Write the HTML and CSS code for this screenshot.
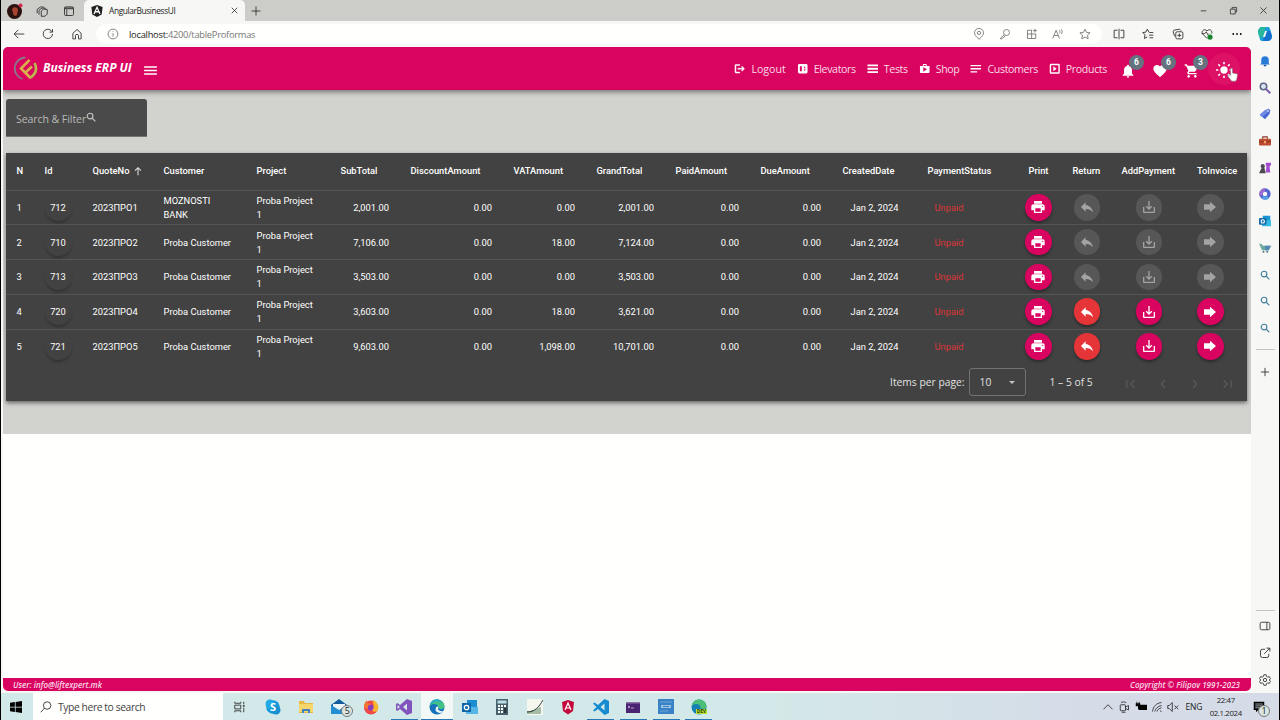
FILE: index.html
```html
<!DOCTYPE html>
<html lang="en">
<head>
	<meta charset="utf-8">
	<title>AngularBusinessUI</title>
	<link rel="stylesheet" href="styles.css">
</head>
<body>

<svg class="defs">
	<symbol id="print" viewBox="0 0 24 24"><path d="M19 8H5c-1.66 0-3 1.34-3 3v6h4v4h12v-4h4v-6c0-1.66-1.34-3-3-3zm-3 11H8v-5h8v5zm3-7c-.55 0-1-.45-1-1s.45-1 1-1 1 .45 1 1-.45 1-1 1zm-1-9H6v4h12V3z"/></symbol>
	<symbol id="reply" viewBox="0 0 24 24"><path d="M10 9V5l-7 7 7 7v-4.1c5 0 8.5 1.6 11 5.1-1-5-4-10-11-11z"/></symbol>
	<symbol id="save" viewBox="0 0 24 24"><path d="M19 12v7H5v-7H3v7c0 1.1.9 2 2 2h14c1.1 0 2-.9 2-2v-7h-2zm-6 .67l2.59-2.58L17 11.5l-5 5-5-5 1.41-1.41L11 12.67V3h2z"/></symbol>
	<symbol id="forward" viewBox="0 0 24 24"><path d="M3 8h9V4l9 8-9 8v-4H3z"/></symbol>
	<symbol id="glass" viewBox="0 0 16 16"><circle cx="6.5" cy="6.5" r="4.5"/><path d="M10 10l5 5"/></symbol>
</svg>

<div class="titlebar">
	<div class="tab-tools">
		<svg class="avatar" viewBox="0 0 16 16"><circle cx="7.5" cy="8.5" r="7.5" fill="#2b1210"/><path d="M5 6c2-3 6-2 6 1l-1 5c-2 2-4 0-4-2z" fill="#a5452f"/><circle cx="13.5" cy="2.5" r="2" fill="#d32444"/></svg>
		<svg class="line" viewBox="0 0 16 16"><path d="M1.500 11V6L6 2.500l5 .5M4 13V7l4-3 5 .5M7 8l3-2.500 5 .5v6l-3 3H7z"/></svg>
		<svg class="line" viewBox="0 0 16 16"><rect x="2" y="2.5" width="12" height="11.5" rx="1.5"/><path d="M2 5h12M2 4h12M5 6v8"/></svg>
	</div>
	<div class="tab">
		<svg viewBox="0 0 16 16" width="12" height="12"><path d="M8 0l7.5 2.700-1.200 9.800L8 16l-6.300-3.500L.5 2.700z" fill="#202020"/><path d="M4 12L8 3l4 9M5.500 9h5" fill="none" stroke="#fff" stroke-width="1.7"/></svg>
		<span class="tab-title">AngularBusinessUI</span>
		<svg class="line tab-close" viewBox="0 0 16 16"><path d="M4 4l8 8M12 4l-8 8"/></svg>
	</div>
	<svg class="line new-tab" viewBox="0 0 16 16"><path d="M8 2v12M2 8h12"/></svg>
	<div class="window-buttons">
		<svg class="line" viewBox="0 0 16 16"><path d="M4 8.5h8"/></svg>
		<svg class="line" viewBox="0 0 16 16"><path d="M3.500 6h7v7h-7zM6 6V3.500h6.500V10h-2"/></svg>
		<svg class="line" viewBox="0 0 16 16"><path d="M3.500 3.500l9 9M12.500 3.500l-9 9"/></svg>
	</div>
</div>

<div class="browser">
	<div class="main">
		<div class="toolbar">
			<div class="nav-buttons">
				<svg class="line" viewBox="0 0 16 16"><path d="M15 8H1.500M7 2.500L1.500 8 7 13.500"/></svg>
				<svg class="line" viewBox="0 0 16 16"><path d="M14 8a6.200 6.200 0 1 1-2-4.700L14 5.500M14 1.500v4h-4"/></svg>
				<svg class="line" viewBox="0 0 16 16"><path d="M2.500 14.500V7L8 2l5.500 5v7.500H10V10c0-2-4-2-4 0v4.500z"/></svg>
			</div>
			<div class="address">
				<svg class="line info" viewBox="0 0 16 16"><circle cx="8" cy="8" r="6.5"/><path d="M8 7v4.500M8 4.500v1"/></svg>
				<span class="url"><b>localhost:</b>4200/tableProformas</span>
				<div class="address-icons">
					<svg class="line" viewBox="0 0 16 16"><path d="M8 15C4 11.500 2 9 2 6.500a6 6 0 0 1 12 0C14 9 12 11.500 8 15z"/><circle cx="8" cy="6.5" r="2.2"/></svg>
					<svg class="line" viewBox="0 0 16 16"><circle cx="10" cy="6" r="4"/><path d="M7 9l-5 4.500v1h2l1-1.500 1.500-.5L8.500 10"/></svg>
					<svg class="line" viewBox="0 0 16 16"><path d="M8 3H2v11h11V8H2M7.500 3v11M12 1v5M9.500 3.500h5"/></svg>
					<svg class="line" viewBox="0 0 16 16"><path d="M1 14L5.500 3 10 14M2.500 10h6M9.500 3c1.500 1 1.500 3 .5 4M12 1.500c2 2 2 4.500.5 6.500"/></svg>
					<svg class="line" viewBox="0 0 16 16"><path d="M8 1.500l2 4.300 4.800.6-3.500 3.200.9 4.800L8 12.100l-4.200 2.300.9-4.800L1.200 6.400 6 5.800z"/></svg>
				</div>
			</div>
			<div class="browser-icons">
				<svg class="line" viewBox="0 0 16 16"><path d="M6 3H1.500v10H6M10 3h4.500v10H10M8 1v14"/></svg>
				<svg class="line" viewBox="0 0 16 16"><path d="M9.500 6L7 1.500 5.200 5.500 1 6l3 3-.8 5L7 12M10 6h5M9.500 9.500H15M10 13h5"/></svg>
				<svg class="line" viewBox="0 0 16 16"><rect x="5" y="5" width="9.5" height="9.5" rx="2"/><path d="M9.750 7.300v5M7.300 9.750h5M3.500 11L1.500 5l1-2L10 1.500l2 2"/></svg>
				<svg class="line" viewBox="0 0 16 16"><path d="M8 14L1.800 7.500C0 4 5 0 8 4c3-4 8 0 6.200 3.500M1 7.500h4L7 5l2 4 1.500-1.500"/><circle cx="12" cy="12" r="3.5" fill="#16862e" stroke="none"/></svg>
				<svg viewBox="0 0 16 16"><circle cx="3" cy="8" r="1.2"/><circle cx="8" cy="8" r="1.2"/><circle cx="13" cy="8" r="1.2"/></svg>
			</div>
		</div>

		<div class="page">
			<header class="header">
				<svg class="logo" viewBox="0 0 25 25"><path d="M11.500 1.500A11 11 0 0 0 8.500 23" fill="none" stroke="#86798a" stroke-width="1.8"/><path d="M15.500 4L7 12.500l9.500 9.500M12 16l6-5.500" fill="none" stroke="#dcae4c" stroke-width="2.6"/><path d="M16 22c6-4 7.500-9 4.500-15" fill="none" stroke="#b9b94e" stroke-width="2.6"/></svg>
				<span class="brand">Business ERP UI</span>
				<svg class="menu" viewBox="0 0 24 24"><path d="M3 18h18v-2H3v2zm0-5h18v-2H3v2zm0-7v2h18V6H3z"/></svg>
				<nav class="links">
					<a class="link"><svg viewBox="0 0 24 24"><path d="M17 7l-1.400 1.400 2.600 2.600H8v2h10.200l-2.600 2.600L17 17l5-5zM4 5h8V3H4c-1.100 0-2 .9-2 2v14c0 1.100.9 2 2 2h8v-2H4z" stroke="#fff"/></svg><span class="logout">Logout</span></a>
					<a class="link"><svg viewBox="0 0 24 24"><path fill-rule="evenodd" d="M5 2h14a3 3 0 0 1 3 3v14a3 3 0 0 1-3 3H5a3 3 0 0 1-3-3V5a3 3 0 0 1 3-3zm1 5v10h4V7zm8 4h4l-2-4zm0 2l2 4 2-4z"/></svg>Elevators</a>
					<a class="link"><svg viewBox="0 0 24 24"><path d="M1 3h22v4H1zM1 10h22v4H1zM1 17h22v4H1z"/></svg>Tests</a>
					<a class="link"><svg viewBox="0 0 24 24"><path fill-rule="evenodd" d="M16 6V4c0-1.100-.9-2-2-2h-4c-1.100 0-2 .9-2 2v2H2v13c0 1.100.9 2 2 2h16c1.100 0 2-.9 2-2V6zm-6-2h4v2h-4zM9 18V9l7.500 4z"/></svg>Shop</a>
					<a class="link"><svg viewBox="0 0 24 24"><path d="M1 4h22v3H1zM1 10.500h22v3H1zM1 17h14v3H1z"/></svg>Customers</a>
					<a class="link"><svg viewBox="0 0 24 24"><rect x="3" y="3" width="18" height="18" rx="1" fill="none" stroke="#fff" stroke-width="3"/><path d="M9 7v10l7-5z"/></svg>Products</a>
				</nav>
				<div class="actions">
					<div class="action"><svg viewBox="0 0 24 24"><path d="M12 22c1.100 0 2-.9 2-2h-4c0 1.100.9 2 2 2zm6-6v-5c0-3.070-1.630-5.640-4.500-6.320V4c0-.83-.67-1.500-1.500-1.500s-1.500.67-1.500 1.500v.68C7.640 5.360 6 7.920 6 11v5l-2 2v1h16v-1z"/></svg><span class="badge">6</span></div>
					<div class="action"><svg viewBox="0 0 24 24"><path d="M12 21.350l-1.450-1.320C5.400 15.360 2 12.280 2 8.500 2 5.420 4.420 3 7.500 3c1.740 0 3.410.81 4.500 2.090C13.090 3.810 14.760 3 16.500 3 19.580 3 22 5.420 22 8.500c0 3.780-3.400 6.860-8.550 11.540z"/></svg><span class="badge">6</span></div>
					<div class="action"><svg viewBox="0 0 24 24"><path d="M7 18c-1.100 0-1.990.9-1.990 2S5.900 22 7 22s2-.9 2-2-.9-2-2-2zM1 2v2h2l3.600 7.590-1.350 2.450c-.16.28-.25.61-.25.96 0 1.100.9 2 2 2h12v-2H7.420l-.12-.37.9-1.630h7.450c.75 0 1.410-.41 1.750-1.030L21 5.500 20 4H5.210L4.270 2H1zm16 16c-1.100 0-1.990.9-1.990 2s.89 2 1.990 2 2-.9 2-2-.9-2-2-2z"/></svg><span class="badge">3</span></div>
					<div class="action theme">
						<svg viewBox="0 0 24 24"><circle cx="12" cy="12" r="5.5"/><path d="M12 0v3.500M12 20.500V24M0 12h3.500M20.500 12H24M3.500 3.500L6 6M18 18l2.500 2.500M3.500 20.500L6 18M18 6l2.500-2.500" stroke="#fff" stroke-width="2.4"/></svg>
						<svg class="pointer" viewBox="0 0 14 18"><path d="M4.500 10V2.500c0-2 2.500-2 2.500 0V7l5 1c1 .3 1.500 1 1.300 2l-.8 5-1.500 2.500H6L1 11c-.5-1.500 1-2 2-1z" fill="#fff" stroke="#777" stroke-width=".7"/></svg>
					</div>
				</div>
			</header>

			<section class="content">
				<div class="filter">Search &amp; Filter<svg class="line" viewBox="0 0 16 16"><use href="#glass"/></svg></div>

				<div class="card">
					<table class="quotes">
						<colgroup><col class="c-n"><col class="c-id"><col class="c-quote"><col class="c-customer"><col class="c-project"><col class="c-sub"><col class="c-discount"><col class="c-vat"><col class="c-grand"><col class="c-paid"><col class="c-due"><col class="c-date"><col class="c-status"><col class="c-print"><col class="c-return"><col class="c-add"><col class="c-invoice"></colgroup>
						<tr><th class="n">N</th><th>Id</th><th>QuoteNo <svg class="sort" viewBox="0 0 12 12"><path d="M6 11V2M2.500 5.500L6 2l3.500 3.500"/></svg></th><th>Customer</th><th>Project</th><th>SubTotal</th><th>DiscountAmount</th><th>VATAmount</th><th>GrandTotal</th><th>PaidAmount</th><th>DueAmount</th><th>CreatedDate</th><th>PaymentStatus</th><th>Print</th><th>Return</th><th>AddPayment</th><th>ToInvoice</th></tr>
						<tr>
							<td class="n">1</td><td><span class="id">712</span></td><td>2023ПРО1</td><td class="customer">MOZNOSTI BANK</td><td class="project">Proba Project 1</td>
							<td class="num">2,001.00</td><td class="num">0.00</td><td class="num">0.00</td><td class="num">2,001.00</td><td class="num">0.00</td><td class="num">0.00</td><td class="date">Jan 2, 2024</td><td class="status">Unpaid</td>
							<td><button class="fab b-print"><svg><use href="#print"/></svg></button></td><td><button class="fab b-return off"><svg><use href="#reply"/></svg></button></td><td><button class="fab b-add off"><svg><use href="#save"/></svg></button></td><td><button class="fab off"><svg><use href="#forward"/></svg></button></td>
						</tr>
						<tr>
							<td class="n">2</td><td><span class="id">710</span></td><td>2023ПРО2</td><td class="customer">Proba Customer</td><td class="project">Proba Project 1</td>
							<td class="num">7,106.00</td><td class="num">0.00</td><td class="num">18.00</td><td class="num">7,124.00</td><td class="num">0.00</td><td class="num">0.00</td><td class="date">Jan 2, 2024</td><td class="status">Unpaid</td>
							<td><button class="fab b-print"><svg><use href="#print"/></svg></button></td><td><button class="fab b-return off"><svg><use href="#reply"/></svg></button></td><td><button class="fab b-add off"><svg><use href="#save"/></svg></button></td><td><button class="fab off"><svg><use href="#forward"/></svg></button></td>
						</tr>
						<tr>
							<td class="n">3</td><td><span class="id">713</span></td><td>2023ПРО3</td><td class="customer">Proba Customer</td><td class="project">Proba Project 1</td>
							<td class="num">3,503.00</td><td class="num">0.00</td><td class="num">0.00</td><td class="num">3,503.00</td><td class="num">0.00</td><td class="num">0.00</td><td class="date">Jan 2, 2024</td><td class="status">Unpaid</td>
							<td><button class="fab b-print"><svg><use href="#print"/></svg></button></td><td><button class="fab b-return off"><svg><use href="#reply"/></svg></button></td><td><button class="fab b-add off"><svg><use href="#save"/></svg></button></td><td><button class="fab off"><svg><use href="#forward"/></svg></button></td>
						</tr>
						<tr>
							<td class="n">4</td><td><span class="id">720</span></td><td>2023ПРО4</td><td class="customer">Proba Customer</td><td class="project">Proba Project 1</td>
							<td class="num">3,603.00</td><td class="num">0.00</td><td class="num">18.00</td><td class="num">3,621.00</td><td class="num">0.00</td><td class="num">0.00</td><td class="date">Jan 2, 2024</td><td class="status">Unpaid</td>
							<td><button class="fab b-print"><svg><use href="#print"/></svg></button></td><td><button class="fab b-return warn"><svg><use href="#reply"/></svg></button></td><td><button class="fab b-add"><svg><use href="#save"/></svg></button></td><td><button class="fab"><svg><use href="#forward"/></svg></button></td>
						</tr>
						<tr>
							<td class="n">5</td><td><span class="id">721</span></td><td>2023ПРО5</td><td class="customer">Proba Customer</td><td class="project">Proba Project 1</td>
							<td class="num">9,603.00</td><td class="num">0.00</td><td class="num">1,098.00</td><td class="num">10,701.00</td><td class="num">0.00</td><td class="num">0.00</td><td class="date">Jan 2, 2024</td><td class="status">Unpaid</td>
							<td><button class="fab b-print"><svg><use href="#print"/></svg></button></td><td><button class="fab b-return warn"><svg><use href="#reply"/></svg></button></td><td><button class="fab b-add"><svg><use href="#save"/></svg></button></td><td><button class="fab"><svg><use href="#forward"/></svg></button></td>
						</tr>
					</table>
					<div class="paginator">
						<span class="per-page">Items per page:</span>
						<div class="select">10<span class="caret"></span></div>
						<span class="range">1 – 5 of 5</span>
						<div class="pager">
							<svg viewBox="0 0 16 16"><path d="M2.500 3v10M12.500 3l-5 5 5 5"/></svg>
							<svg viewBox="0 0 16 16"><path d="M10.500 3l-5 5 5 5"/></svg>
							<svg viewBox="0 0 16 16"><path d="M5.500 3l5 5-5 5"/></svg>
							<svg viewBox="0 0 16 16"><path d="M3.500 3l5 5-5 5M13.500 3v10"/></svg>
						</div>
					</div>
				</div>
			</section>

			<footer class="footer"><span>User: info@liftexpert.mk</span><span class="copy">Copyright © Filipov 1991-2023</span></footer>
		</div>
	</div>

	<aside class="sidebar">
		<div><svg class="copilot" viewBox="0 0 16 16"><path d="M5 1h6c2 0 2 2 3 5l1 4c0 3-2 5-5 5H5c-2 0-2-2-3-5L1 6c0-3 2-5 4-5z" fill="#1a9fdc"/><path d="M5 1h4L6 10c-.5 2-3 2-4 0L1 6c0-3 2-5 4-5z" fill="#28b79a"/><path d="M9 5h4l2 5c0 3-2 5-5 5H6z" fill="#1670ce"/><path d="M8 5h2L8 11H6z" fill="#eef8ee"/></svg></div>
		<div><svg viewBox="0 0 16 16"><path d="M3 11V6c0-6 10-6 10 0v5l1.500 1.500h-13z" fill="#277bd4"/><path d="M6 13h4c0 3-4 3-4 0z" fill="#1554a4"/></svg></div>
		<div><svg viewBox="0 0 16 16"><circle cx="6" cy="6" r="4.3" fill="#d9e6f3" stroke="#626582" stroke-width="2"/><path d="M9.500 9.500L15 15" stroke="#7959ad" stroke-width="2.8"/></svg></div>
		<div><svg viewBox="0 0 16 16"><path d="M8 3l5-2 2 2-1 5-6 7-7-6z" fill="#4968d0"/><path d="M8 3l5-2 2 2-11 9-3-3z" fill="#6e8be5"/><circle cx="12" cy="4" r="1" fill="#fff"/></svg></div>
		<div><svg viewBox="0 0 16 16"><path d="M5 5V2.500h6V5" fill="none" stroke="#8c3726" stroke-width="1.5"/><rect x="0" y="5" width="16" height="9" rx="1.5" fill="#bb4a2f"/><path d="M0 9h16" stroke="#752f23"/><path d="M6.500 8h3v3h-3z" fill="#f5a164"/></svg></div>
		<div><svg viewBox="0 0 16 16"><path d="M9 1h7v3l-2 2 1 8H9l1-8-1-2z" fill="#a34bce"/><circle cx="5" cy="5.5" r="2.7" fill="#4c4a51"/><path d="M4 7h3l2 8H0z" fill="#4c4a51"/></svg></div>
		<div><svg viewBox="0 0 16 16"><circle cx="8" cy="8" r="5.3" fill="none" stroke="#5464cf" stroke-width="4.5"/><path d="M3 10A5.300 5.300 0 0 1 8 2.700" fill="none" stroke="#9e6bd2" stroke-width="4.5"/><path d="M12 12c-2 2-5 2-7 0" fill="none" stroke="#52a1e6" stroke-width="4"/></svg></div>
		<div><svg viewBox="0 0 16 16"><rect x="5" y="1" width="10" height="7" fill="#1798d5"/><path d="M4 7h12v8H4z" fill="#38bce6"/><rect x="0" y="4" width="10" height="9" rx="1" fill="#156ba8"/><circle cx="5" cy="8.5" r="2.2" fill="none" stroke="#fff" stroke-width="1.5"/></svg></div>
		<div><svg viewBox="0 0 16 16"><path d="M0 2l4 1 1 2h11l-3 6H4z" fill="#6da99c"/><path d="M8 5h8l-3 6H8z" fill="#538ab4"/><circle cx="6" cy="13" r="1.3" fill="#497486"/><circle cx="11" cy="13" r="1.3" fill="#497486"/></svg></div>
		<div><svg class="find" viewBox="0 0 16 16"><use href="#glass"/></svg></div>
		<div><svg class="find" viewBox="0 0 16 16"><use href="#glass"/></svg></div>
		<div><svg class="find" viewBox="0 0 16 16"><use href="#glass"/></svg></div>
		<hr>
		<div class="add"><svg class="line" viewBox="0 0 16 16"><path d="M8 2.500v11M2.500 8h11"/></svg></div>
		<hr class="bottom">
		<div><svg class="line" viewBox="0 0 16 16"><rect x="1.500" y="3" width="13" height="10" rx="2"/><path d="M10.500 3v10"/></svg></div>
		<div><svg class="line" viewBox="0 0 16 16"><path d="M8 3H4.500Q2 3 2 5.500v6Q2 14 4.500 14h6Q13 14 13 11.500V9M10 1.500h4.500V6M14.500 1.500L7 9"/></svg></div>
		<div><svg class="line" viewBox="0 0 16 16"><path d="M6.500 1h3l.6 2.300 1.400.8 2.300-.6 1.500 2.600L13.600 8l1.700 1.900-1.500 2.600-2.300-.6-1.400.8-.6 2.300h-3l-.6-2.300-1.400-.8-2.300.6L.7 9.900 2.400 8 .7 6.100l1.500-2.600 2.300.6 1.400-.8z"/><circle cx="8" cy="8" r="2.2"/></svg></div>
	</aside>
</div>

<div class="taskbar">
	<div class="start"><svg viewBox="0 0 16 16"><path d="M0 2.300L6.500 1.400v6.100H0zM7.500 1.200L16 0v7.500H7.500zM0 8.500h6.500v6.100L0 13.700zM7.500 8.500H16V16l-8.500-1.200z"/></svg></div>
	<div class="search"><svg class="line" viewBox="0 0 16 16"><circle cx="9.5" cy="6" r="5"/><path d="M6 9.500L1 15"/></svg>Type here to search</div>
	<div class="apps">
		<div class="app"><svg class="line view" viewBox="0 0 16 16"><path d="M1 1v2h8V1M1 15v-2h8v2M1 5.500h8v5H1zM13 1v3M13 9v6"/><circle cx="13" cy="6.500" r="1"/></svg></div>
		<div class="app"><svg viewBox="0 0 16 16"><circle cx="8" cy="8" r="6.8" fill="#179bd8"/><circle cx="5" cy="5" r="4.5" fill="#21a9e5"/><circle cx="11" cy="11" r="4.5" fill="#1592cf"/><text x="8" y="12" class="glyph">S</text></svg></div>
		<div class="app"><svg viewBox="0 0 16 16"><path d="M1 2h5l1 2h8v10H1z" fill="#e6b943"/><path d="M1 5h14v8H1z" fill="#f6d66a"/><path d="M4 14v-4h8v4h-2v-2H6v2z" fill="#4285bd"/></svg></div>
		<div class="app mail"><svg viewBox="0 0 16 16"><path d="M0 6l8-6 8 6v9H0z" fill="#115c9b"/><path d="M2 5h12v7H2z" fill="#eef6fa"/><path d="M0 6l8 5 8-5v9H0z" fill="#238ed1"/></svg><span class="count">5</span></div>
		<div class="app"><svg viewBox="0 0 16 16"><circle cx="8" cy="8.5" r="7" fill="#ee4a48"/><path d="M10 1c5 2 7 8 4 11-2 1-4 1-5-1 2-2 2-5 1-7z" fill="#f8b52d"/><circle cx="7.5" cy="8.5" r="3" fill="#883bbd"/><path d="M1 8c0-4 2-6 3-7v3l4 1-3 2v3z" fill="#f37730"/></svg></div>
		<div class="app open"><svg viewBox="0 0 16 16"><path d="M11 0l5 2v12l-5 2-7-6-2.500 2L0 11V5l1.500-1L4 6zm0 4.500L7 8l4 3.500zM1.500 6v4L4 8z" fill="#8253bd" fill-rule="evenodd"/></svg></div>
		<div class="app open current"><svg viewBox="0 0 16 16"><circle cx="8" cy="8" r="7.5" fill="#1872bb"/><path d="M.7 7C2-2 15-1 15.500 7c0 4-6 4-6 1.500C10 6 5 3 .7 7z" fill="#43c184"/><path d="M.7 7C2-2 12-1 13 4 9 1 4 2 .7 7z" fill="#25a9c8"/><path d="M9.500 8.500C8 10 10 13 14.500 12 13 15 8 14 7 12s0-6 3-4z" fill="#edf7f4"/></svg></div>
		<div class="app"><svg viewBox="0 0 16 16"><rect x="5" y="1" width="10" height="8" fill="#1c8dd0"/><path d="M4 8h12v7H4z" fill="#55b5e5"/><rect x="0" y="4" width="9" height="9" fill="#0d66a6"/><circle cx="4.5" cy="8.5" r="2.2" fill="none" stroke="#fff" stroke-width="1.3"/></svg></div>
		<div class="app"><svg viewBox="0 0 16 16"><rect x="2" width="12" height="16" fill="#47616d"/><rect x="3.5" y="1.5" width="9" height="3" fill="#b8dfe5"/><path d="M4 7h2M7 7h2M10 7h2M4 10h2M7 10h2M4 13h2M7 13h2" stroke="#fff" stroke-width="2"/><path d="M10 9h2.500v5H10z" fill="#29353c"/></svg></div>
		<div class="app"><svg viewBox="0 0 16 16"><path d="M0 0h16v16H0z" fill="#f5f7ef"/><path d="M1 15v-3M3 15v-3M5 15v-4M7 15v-4M9 15v-5M11 15v-6M13 15v-7" stroke="#59815b"/><path d="M0 13c8 0 12-5 16-12" fill="none" stroke="#283533"/></svg></div>
		<div class="app"><svg viewBox="0 0 16 16"><path d="M8 1l6 2-1 9-5 3.500L3 12 2 3z" fill="#c3093c"/><path d="M5 11l3-7 3 7M6 9h4" fill="none" stroke="#fff" stroke-width="1.2"/></svg></div>
		<div class="app open"><svg viewBox="0 0 16 16"><path d="M11.500 0L16 2v12l-4.500 2L5 10l-3.500 2.500L0 11.500 3.500 8 0 4.500l1.500-1L5 6zm0 4.500L7.500 8l4 3.500z" fill="#168bd0" fill-rule="evenodd"/></svg></div>
		<div class="app open"><svg viewBox="0 0 16 16"><rect x="1" y="3" width="14" height="11" fill="#4b2373"/><path d="M1 3h14v1.500H1z" fill="#8e72a6"/><path d="M3 7l2 1-2 1M6 9h3" fill="none" stroke="#d5cadd" stroke-width=".8"/></svg></div>
		<div class="app open"><svg viewBox="0 0 16 16"><path d="M0 0h16v15H0z" fill="#3a82c6"/><path d="M2 3h12M2 12h8" stroke="#6ba5d5"/><path d="M3 6h10v3H3z" fill="#9bc3e0"/><path d="M5 7.500h6" stroke="#3a82c6"/></svg></div>
		<div class="app open"><svg viewBox="0 0 16 16"><circle cx="8" cy="8" r="7.5" fill="#1681b5"/><path d="M.7 7C2-2 15-1 15.500 7c0 4-6 4-6 1.500C10 6 5 3 .7 7z" fill="#4bbf78"/><path d="M5 10h11v5H5z" fill="#b5e331"/><text x="10.5" y="14.200" class="dev">DEV</text></svg></div>
	</div>
	<div class="tray">
		<svg class="line" viewBox="0 0 16 16"><path d="M2 11l6-6 6 6"/></svg>
		<svg class="line" viewBox="0 0 16 16"><rect x="3" y="5" width="7" height="8" rx="1"/><path d="M10 8l4-2v6l-4-2M4 2c2-1 4-1 7 0M5 15h5"/></svg>
		<svg class="battery" viewBox="0 0 16 16"><path d="M4 5h12v7H5zM1 3h1V1h1v2h2V1h1v2h1v4H5v4H4V7H1z"/></svg>
		<svg class="line" viewBox="0 0 16 16"><path d="M2 14C3 7 7 3 14 2M5 14c1-4 4-7 9-8M8 14c1-3 3-4 6-5M12 13l2 1"/></svg>
		<svg class="line" viewBox="0 0 16 16"><path d="M1 6h2l4-4v12l-4-4H1zM10 6l5 5M15 6l-5 5"/></svg>
		<span class="lang">ENG</span>
		<div class="clock"><span>22:47</span><span>02.1.2024</span></div>
		<div class="notes"><svg viewBox="0 0 16 16"><path d="M1 1h14v11H7l-3 3v-3H1z"/><path d="M3 4h10M3 6.500h10M3 9h6" stroke="#d4dce6"/></svg><span class="count">1</span></div>
	</div>
</div>

</body>
</html>
```
FILE: styles.css
```css
* {
  box-sizing: border-box;
}

body {
  margin: 0;
  width: 1280px;
  height: 720px;
  overflow: hidden;
  display: flex;
  flex-direction: column;
  border-left: 1px solid #000;
  border-right: 1px solid #000;
  background: #f7f7f5;
  font-family: "Open Sans", "Noto Sans", sans-serif;
  color: #222;
}

svg {
  display: block;
  flex: none;
  width: 12px;
  height: 12px;
}

.defs {
  width: 0;
  height: 0;
  position: absolute;
}

.line {
  fill: none;
  stroke: #333;
  stroke-width: 1.2;
}

/* browser window */
.titlebar {
  height: 21px;
  flex: none;
  display: flex;
  align-items: center;
  background: #cccdc9;
}

.tab-tools {
  width: 83px;
  display: flex;
  align-items: center;
  gap: 15.5px;
  padding-left: 6px;
}

.tab-tools .avatar {
  width: 16px;
  height: 16px;
  margin-right: -3px;
}

.tab {
  width: 161px;
  height: 21px;
  display: flex;
  align-items: center;
  padding: 0 5px 0 7px;
  border-radius: 5px 5px 0 0;
  background: #f7f8f5;
}

.tab-title {
  margin-left: 6px;
  font-size: 8.4px;
  letter-spacing: -0.4px;
}

.tab-close {
  width: 11px;
  height: 11px;
  margin-left: auto;
}

.new-tab {
  margin-left: 5px;
}

.window-buttons {
  display: flex;
  gap: 19px;
  margin-left: auto;
  margin-right: 10px;
}

.window-buttons svg {
  width: 11px;
  height: 11px;
}

.browser {
  height: 672px;
  flex: none;
  display: flex;
}

.main {
  width: 1250px;
  padding-left: 2px;
}

.toolbar {
  height: 26px;
  display: flex;
  align-items: center;
}

.nav-buttons {
  width: 93px;
  display: flex;
  gap: 17px;
  padding-left: 10px;
}

.address {
  width: 1006px;
  height: 20px;
  display: flex;
  align-items: center;
  padding: 0 11px;
  border-radius: 10px;
  background: #fffffd;
}

.info {
  stroke: #777;
}

.url {
  margin-left: 10px;
  font-size: 9.3px;
  letter-spacing: -0.25px;
  color: #777;
}

.url b {
  font-weight: 400;
  color: #222;
}

.address-icons {
  display: flex;
  gap: 14.6px;
  margin-left: auto;
}

.address-icons .line {
  stroke: #777;
}

.browser-icons {
  display: flex;
  gap: 17.4px;
  margin-left: 11px;
}

.page {
  width: 1248px;
  height: 644px;
  display: flex;
  flex-direction: column;
  overflow: hidden;
  border-radius: 5px;
  background: #fffffd;
}

/* app header */
.header {
  position: relative;
  height: 43px;
  flex: none;
  display: flex;
  align-items: center;
  padding-left: 11px;
  background: #d9045f;
  box-shadow: 0 2px 5px rgba(0, 0, 0, .45);
}

.header svg {
  fill: #fff;
}

.header .logo {
  width: 25px;
  height: 25px;
  fill: none;
}

.brand {
  margin: 0 9px 2px 4px;
  width: 90px;
  white-space: nowrap;
  font-size: 12px;
  font-weight: 700;
  font-style: italic;
  color: #fff;
}

.header .menu {
  width: 17px;
  height: 17px;
  margin-top: 4px;
}

.links {
  display: flex;
  gap: 11px;
  margin-left: auto;
  margin-right: 5px;
}

.link {
  display: flex;
  align-items: center;
  gap: 5.5px;
  font-size: 10.6px;
  letter-spacing: -0.35px;
  color: #f9dbe8;
}

.link svg {
  width: 11.5px;
  height: 11.5px;
}

.logout {
  letter-spacing: 0;
}

.actions {
  display: flex;
  margin-right: 11px;
}

.action {
  position: relative;
  width: 32px;
  height: 32px;
  display: flex;
  align-items: center;
  justify-content: center;
}

.action svg {
  width: 16px;
  height: 16px;
  margin-top: 5px;
}

.badge {
  position: absolute;
  left: 17px;
  top: 2px;
  width: 15px;
  height: 15px;
  border-radius: 50%;
  background: #64737f;
  color: #fff;
  font: 700 8.5px/15px Roboto, sans-serif;
  text-align: center;
}

.theme {
  border-radius: 50%;
  background: #dd1166;
}

.theme svg {
  margin-top: 3px;
}

.theme .pointer {
  position: absolute;
  left: 19px;
  top: 14px;
  width: 11px;
  height: 15px;
  margin: 0;
}

/* page content */
.content {
  height: 344px;
  padding: 9px 3px 0;
  background: #d2d3cf;
}

.filter {
  width: 141px;
  height: 38px;
  display: flex;
  align-items: center;
  padding: 2px 0 0 10px;
  border-radius: 3px 3px 0 0;
  border-bottom: 1px solid #747474;
  background: #4a4a4a;
  color: #b9b9b9;
  font-size: 10.6px;
  letter-spacing: -0.1px;
}

.filter .line {
  width: 10px;
  height: 10px;
  margin-top: -4px;
  stroke: #c4c4c4;
  stroke-width: 1.8;
}

.card {
  width: 1241px;
  height: 248px;
  margin-top: 16px;
  background: #424242;
  box-shadow: 0 2px 4px rgba(0, 0, 0, .5);
}

.quotes {
  width: 1241px;
  table-layout: fixed;
  border-collapse: separate;
  border-spacing: 0;
  color: #fff;
  font: 400 9.33px/14px Roboto, sans-serif;
}

.c-n { width: 38.5px; }
.c-id { width: 48px; }
.c-quote { width: 71px; }
.c-customer { width: 93px; }
.c-project { width: 84px; }
.c-sub { width: 70px; }
.c-discount { width: 103px; }
.c-vat { width: 83px; }
.c-grand { width: 79px; }
.c-paid { width: 85px; }
.c-due { width: 82px; }
.c-date { width: 85px; }
.c-status { width: 101px; }
.c-print { width: 44px; }
.c-return { width: 49px; }
.c-add { width: 75.5px; }
.c-invoice { width: 50px; }

th {
  height: 37.5px;
  padding: 0;
  border-bottom: 1px solid #555;
  font-weight: 500;
  text-align: left;
  white-space: nowrap;
}

td {
  height: 34.75px;
  padding: 1px 0 0;
  border-bottom: 1px solid #555;
}

tr:last-child td {
  border-bottom-color: transparent;
}

.n {
  padding-left: 10.5px;
}

.sort {
  display: inline-block;
  width: 10px;
  height: 10px;
  margin-left: 1px;
  vertical-align: -2px;
  fill: none;
  stroke: #ddd;
  stroke-width: 1.3;
}

.id {
  display: block;
  width: 27px;
  height: 27px;
  line-height: 27px;
  margin-top: -1px;
  border-radius: 50%;
  text-align: center;
  box-shadow: 0 3px 3px -1px rgba(0, 0, 0, .25);
}

.customer {
  padding-right: 23px;
}

.project {
  padding-right: 24px;
}

.num {
  padding-right: 21.5px;
  text-align: right;
}

.date {
  padding-left: 8px;
}

.status {
  padding-left: 7px;
  color: #dc3638;
}

.fab {
  display: flex;
  align-items: center;
  justify-content: center;
  width: 26.6px;
  height: 26.6px;
  margin-top: -1px;
  padding: 0;
  border: 0;
  border-radius: 50%;
  background: #d9045f;
  box-shadow: 0 2px 3px rgba(0, 0, 0, .35);
}

.fab svg {
  width: 16px;
  height: 16px;
  fill: #fff;
}

.warn {
  background: #e53538;
}

.off {
  background: #575757;
  box-shadow: none;
}

.off svg {
  fill: #a3a3a3;
}

.b-print { margin-left: -3.5px; }
.b-return { margin-left: 1px; }
.b-add { margin-left: 14px; }

.paginator {
  display: flex;
  align-items: center;
  padding: 4px 0 0 884px;
  color: #e1e1e1;
  font-size: 10.3px;
}

.per-page {
  width: 78.5px;
  white-space: nowrap;
}

.select {
  width: 57px;
  height: 28px;
  display: flex;
  align-items: center;
  justify-content: space-between;
  padding: 0 10px;
  border: 1px solid #727272;
  border-radius: 3px;
}

.caret {
  border: 3.5px solid transparent;
  border-top-color: #c4c4c4;
  border-bottom: 0;
}

.range {
  width: 70px;
  margin-left: 24px;
}

.pager {
  display: flex;
  gap: 20px;
  margin-top: 4px;
  margin-left: 5px;
}

.pager svg {
  fill: none;
  stroke: #5c5c5c;
  stroke-width: 1.5;
}

.footer {
  height: 13px;
  display: flex;
  justify-content: space-between;
  margin-top: auto;
  padding: 0 11px 0 10px;
  background: #d9045f;
  color: #f9dbe8;
  font: italic 600 8px/13px "Open Sans", sans-serif;
}

/* edge sidebar */
.sidebar {
  width: 28px;
  height: 672px;
  display: flex;
  flex-direction: column;
  align-items: center;
}

.sidebar div {
  height: 26.7px;
  display: flex;
  align-items: center;
}

.sidebar .copilot {
  width: 16px;
  height: 16px;
}

.find {
  fill: none;
  stroke: #427f9b;
  stroke-width: 1.8;
}

.sidebar .find {
  width: 10px;
  height: 10px;
}

.sidebar hr {
  width: 19px;
  margin: 8px 0;
  border: 0;
  border-top: 1px solid #c5c5c3;
}

.sidebar .bottom {
  margin: auto 0 2px;
}

/* windows taskbar */
.taskbar {
  height: 27px;
  display: flex;
  background: linear-gradient(90deg, #d2e9ea, #d3e8e8 60%, #d5dce7 85%);
}

.start {
  width: 32px;
  display: flex;
  align-items: center;
  padding-left: 9px;
}

.search {
  width: 190px;
  display: flex;
  align-items: center;
  gap: 6px;
  padding-left: 7px;
  background: #fffffd;
  color: #444;
  font-size: 10.3px;
  letter-spacing: -0.4px;
}

.apps {
  display: flex;
  padding-left: 1px;
}

.app {
  position: relative;
  width: 32.75px;
  display: flex;
  align-items: center;
  justify-content: center;
}

.app svg {
  width: 16px;
  height: 16px;
}

.app .view {
  width: 12px;
  height: 12px;
}

.open {
  background: linear-gradient(#2878b6, #2878b6) center bottom / 27px 1.5px no-repeat;
}

.current {
  background-color: #f2f8f6;
  background-size: 100% 1.5px;
}

.glyph {
  fill: #fff;
  font: 700 11px "Open Sans", sans-serif;
  text-anchor: middle;
}

.dev {
  fill: #1a2c16;
  font: 700 4.5px "Open Sans", sans-serif;
  text-anchor: middle;
}

.count {
  position: absolute;
  left: 19px;
  top: 12px;
  width: 12px;
  height: 12px;
  border: 1px solid #777;
  border-radius: 50%;
  background: #d9e5e3;
  font-size: 9px;
  line-height: 10px;
  text-align: center;
}

.tray {
  display: flex;
  align-items: center;
  gap: 4.3px;
  margin-left: auto;
}

.lang {
  width: 17px;
  margin-left: 2px;
  font-size: 8.5px;
  letter-spacing: -0.2px;
}

.clock {
  width: 38px;
  display: flex;
  flex-direction: column;
  align-items: center;
  line-height: 12.5px;
  font-size: 7.8px;
  letter-spacing: -0.35px;
}

.notes {
  position: relative;
  width: 30px;
  padding-left: 4px;
}

.notes .count {
  left: 9px;
  top: 4px;
}
```
